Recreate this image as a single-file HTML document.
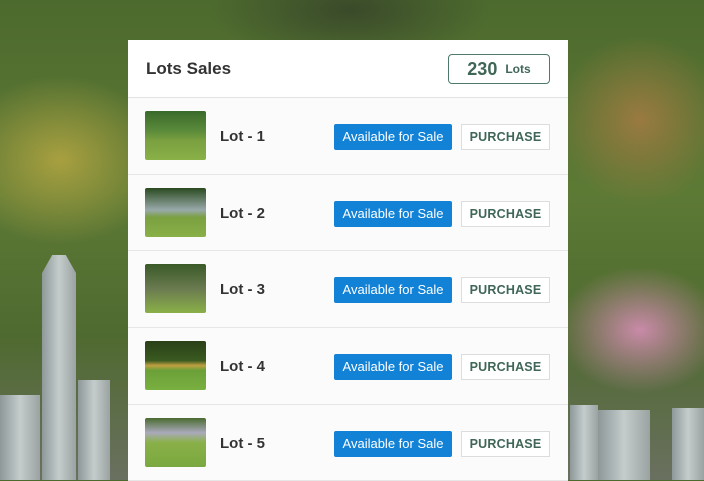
<!DOCTYPE html>
<html><head><style>
*{margin:0;padding:0;box-sizing:border-box}
body{width:704px;height:480px;overflow:hidden;position:relative;font-family:"Liberation Sans",sans-serif;
background:
radial-gradient(ellipse 120px 90px at 640px 330px,#c98aa8 0%,rgba(200,140,170,0) 70%),
radial-gradient(ellipse 150px 120px at 60px 160px,#a8a040 0%,rgba(160,150,60,0) 70%),
radial-gradient(ellipse 120px 120px at 640px 120px,#9a7a40 0%,rgba(150,110,60,0) 70%),
radial-gradient(ellipse 200px 80px at 350px 10px,#3a4a2a 0%,rgba(50,60,40,0) 70%),
linear-gradient(#4d6a2e,#5d7a35 40%,#4f6a30 70%,#6a7060);}
.stone{position:absolute;background:linear-gradient(90deg,#8e9898,#c4cccc,#9aa2a2)}
.card{position:absolute;left:128px;top:40px;width:440px;height:440px;background:#fbfbfb}
.hd{height:58px;background:#fff;border-bottom:1px solid #e3e3e3;position:relative}
.hd h1{position:absolute;left:18px;top:19px;font-size:17px;font-weight:bold;color:#333}
.badge{position:absolute;left:320px;top:14px;width:102px;height:30px;border:1.5px solid #4d7a69;border-radius:4px;color:#3f6656;text-align:center}
.badge b{font-size:18px;position:relative;top:4px}
.badge span{font-size:12px;font-weight:bold;margin-left:8px;position:relative;top:2px}
.row{height:76.7px;border-bottom:1px solid #e6e6e6;position:relative}
.th{position:absolute;left:17px;top:13px;width:61px;height:49px;border-radius:2px;background:linear-gradient(#3a6a2a 0%,#5a8a3a 40%,#7aa040 60%,#8ab048)}
.lot{position:absolute;left:92px;top:30px;font-size:15px;font-weight:bold;color:#333}
.av{position:absolute;left:206px;top:26px;width:118px;height:26px;background:#1282d6;color:#fff;font-size:13px;line-height:26px;text-align:center;border-radius:2px}
.pu{position:absolute;left:333px;top:26px;width:89px;height:26px;border:1px solid #ddd;background:#fff;color:#3f6656;font-size:12.5px;font-weight:bold;line-height:24px;text-align:center;letter-spacing:.2px}
</style></head><body>
<div class="stone" style="left:42px;top:255px;width:34px;height:225px;clip-path:polygon(30% 0,70% 0,100% 8%,100% 100%,0 100%,0 8%)"></div>
<div class="stone" style="left:0;top:395px;width:40px;height:85px"></div>
<div class="stone" style="left:78px;top:380px;width:32px;height:100px"></div>
<div class="stone" style="left:570px;top:405px;width:28px;height:75px"></div>
<div class="stone" style="left:598px;top:410px;width:52px;height:70px"></div>
<div class="stone" style="left:672px;top:408px;width:32px;height:72px"></div>
<div class="card">
<div class="hd"><h1>Lots Sales</h1><div class="badge"><b>230</b><span>Lots</span></div></div>
<div class="row"><div class="th"></div><div class="lot">Lot - 1</div><div class="av">Available for Sale</div><div class="pu">PURCHASE</div></div>
<div class="row"><div class="th" style="background:linear-gradient(#2a4a20 0%,#9aa 45%,#7aa040 60%,#8ab048)"></div><div class="lot">Lot - 2</div><div class="av">Available for Sale</div><div class="pu">PURCHASE</div></div>
<div class="row"><div class="th" style="background:linear-gradient(#3a5a28,#6a7a50 50%,#8ab048)"></div><div class="lot">Lot - 3</div><div class="av">Available for Sale</div><div class="pu">PURCHASE</div></div>
<div class="row"><div class="th" style="background:linear-gradient(#2a4018,#3a5a20 40%,#c0a040 50%,#6aa038 60%,#7ab040)"></div><div class="lot">Lot - 4</div><div class="av">Available for Sale</div><div class="pu">PURCHASE</div></div>
<div class="row"><div class="th" style="background:linear-gradient(#4a6a30,#aab 30%,#8ab048 50%,#7aa840)"></div><div class="lot">Lot - 5</div><div class="av">Available for Sale</div><div class="pu">PURCHASE</div></div>
</div>
</body></html>
